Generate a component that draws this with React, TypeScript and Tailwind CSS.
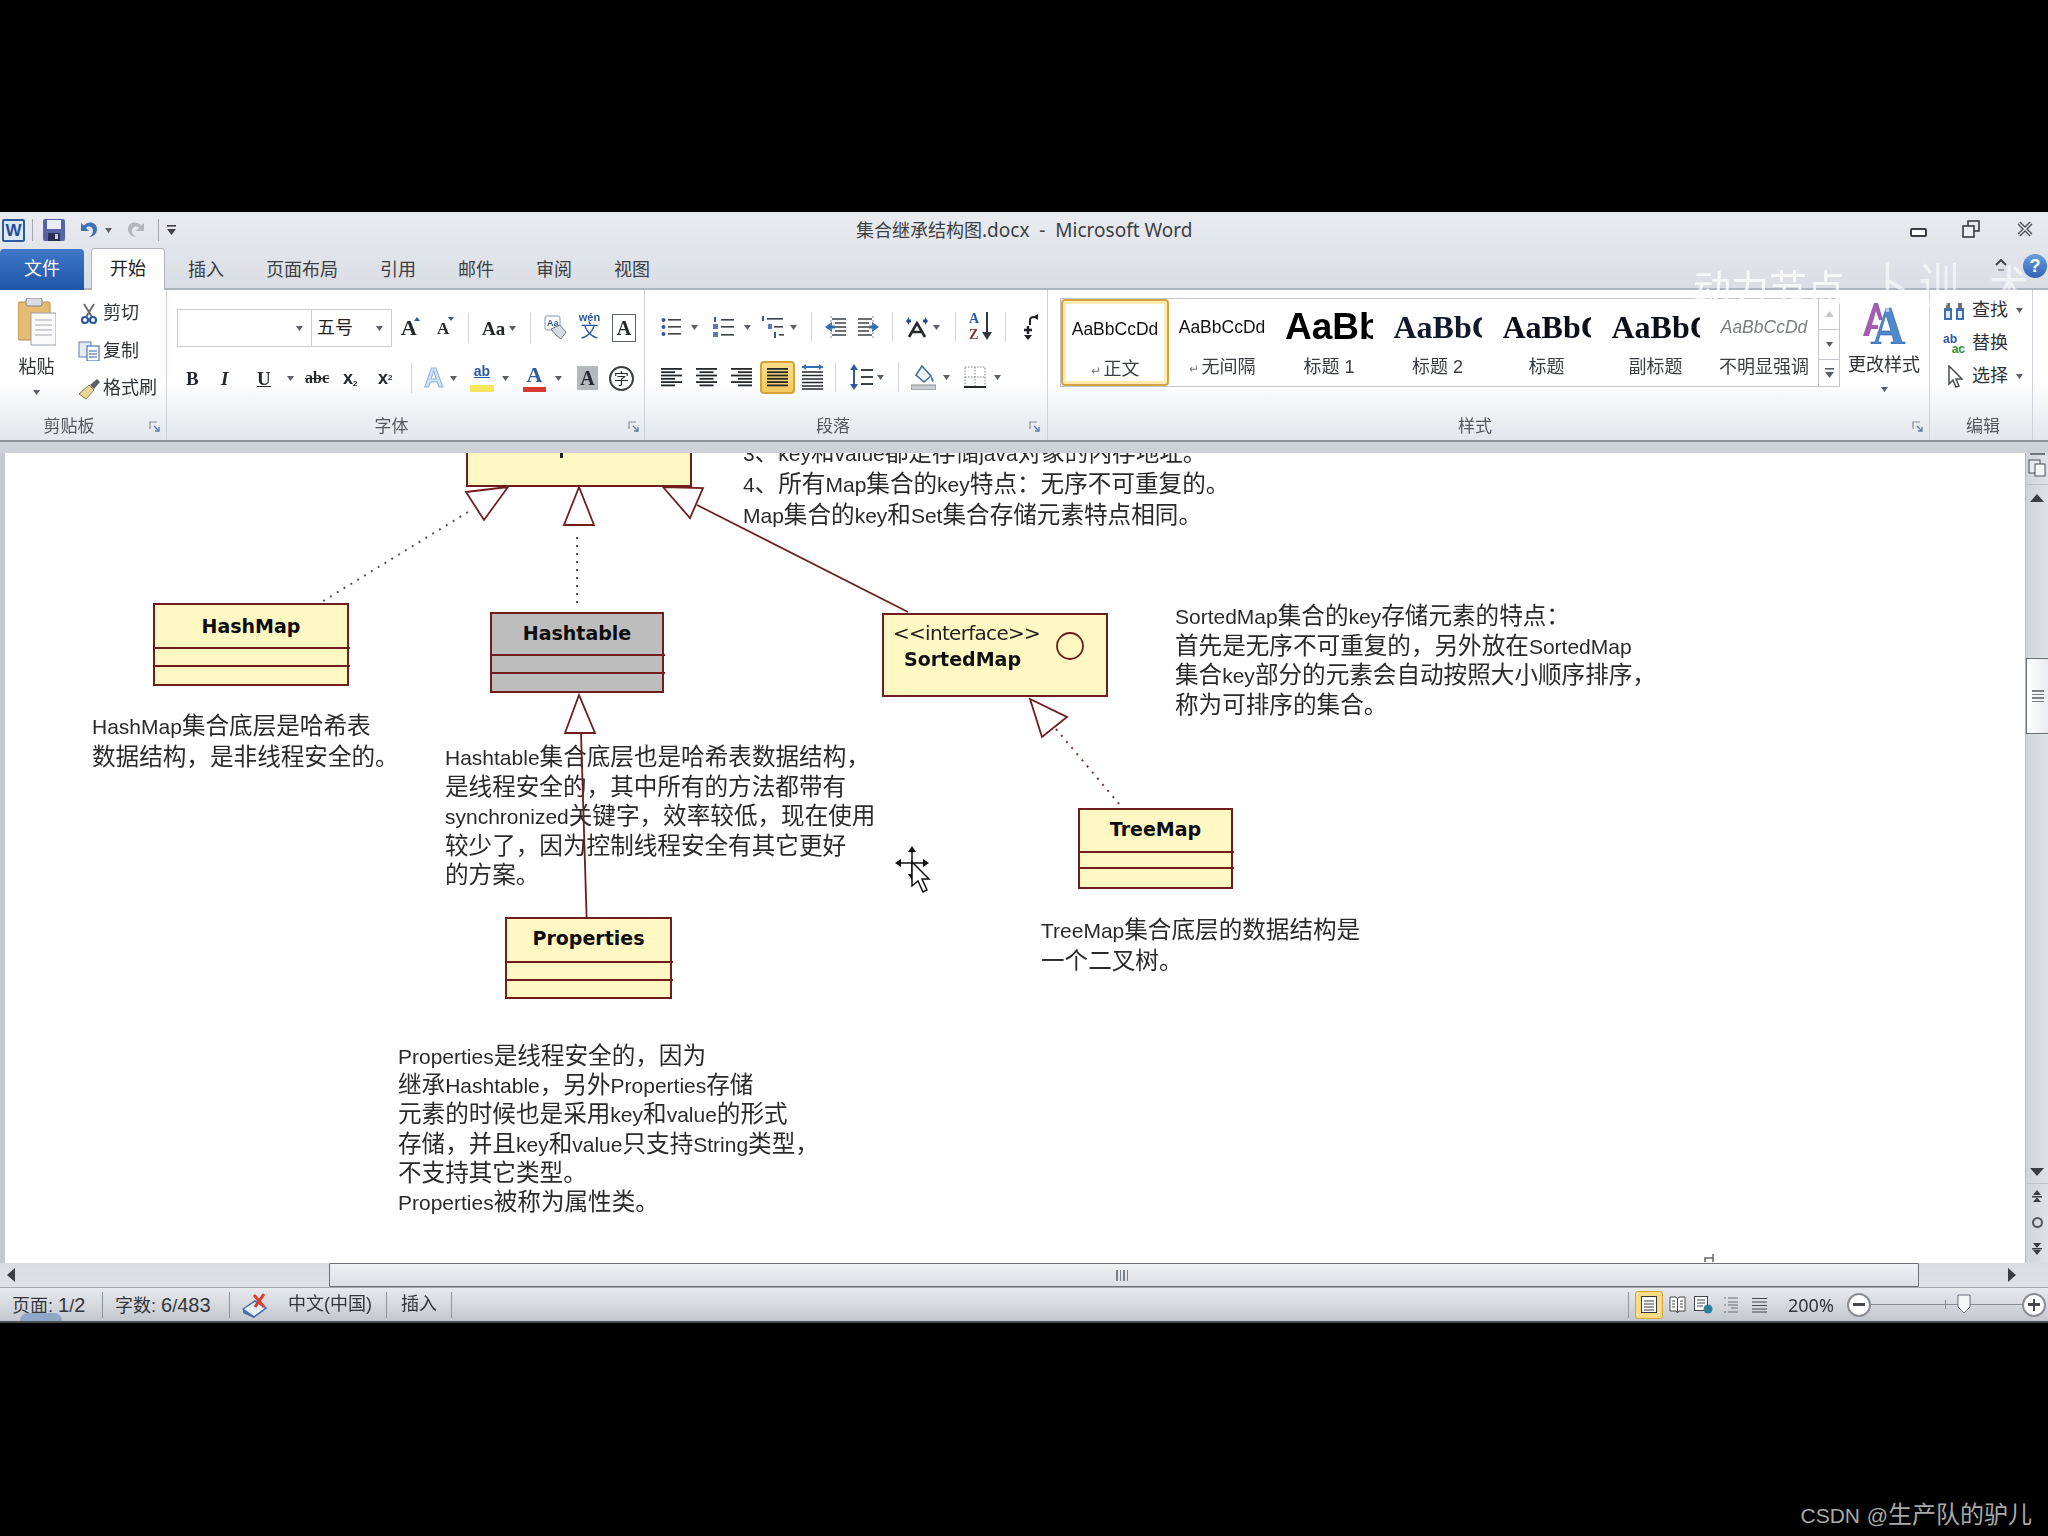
import React from "react";

const CJK = "font-['Liberation_Sans','Noto_Sans_CJK_SC',sans-serif]";

function Mixed({ s, latin = "text-[21px]" }: { s: string; latin?: string }) {
  const parts = s.split(/([A-Za-z0-9<>\-\.]+)/);
  return (
    <>
      {parts.map((p, i) =>
        /^[A-Za-z0-9<>\-\.]+$/.test(p) ? (
          <span key={i} className={latin}>
            {p}
          </span>
        ) : (
          <span key={i}>{p}</span>
        )
      )}
    </>
  );
}

const Arr = ({ className = "" }: { className?: string }) => (
  <svg width="7" height="5" viewBox="0 0 7 5" className={`shrink-0 ${className}`}>
    <path d="M0 0H7L3.5 5Z" fill="#5a5f68" />
  </svg>
);

const Sep = ({ className = "" }: { className?: string }) => (
  <div className={`w-px h-[30px] bg-[#d2d5da] shrink-0 ${className}`} />
);

const Launcher = ({ className = "" }: { className?: string }) => (
  <svg width="11" height="11" viewBox="0 0 11 11" className={`absolute ${className}`}>
    <path d="M1 8V1H8" fill="none" stroke="#8a8f98" strokeWidth="1.2" />
    <path d="M5 5L10 10M10 6V10H6" fill="none" stroke="#5c7ea8" strokeWidth="1.3" />
  </svg>
);

function Lines({ rows, x = 0 }: { rows: [number, number][]; x?: number }) {
  return (
    <>
      {rows.map(([y, l], i) => (
        <rect key={i} x={x} y={y} width={l} height={1.6} fill="#3d4148" />
      ))}
    </>
  );
}

const Ic = ({
  w,
  h,
  className = "",
  children,
}: {
  w: number;
  h: number;
  className?: string;
  children: React.ReactNode;
}) => (
  <svg width={w} height={h} viewBox={`0 0 ${w} ${h}`} className={`shrink-0 ${className}`}>
    {children}
  </svg>
);

const Bullets = ({ className = "" }: { className?: string }) => (
  <Ic w={21} h={20} className={className}>
    <circle cx="2.5" cy="3" r="2" fill="#2f5aa0" />
    <circle cx="2.5" cy="10" r="2" fill="#2f5aa0" />
    <circle cx="2.5" cy="17" r="2" fill="#2f5aa0" />
    <Lines x={7} rows={[[2, 13], [9, 13], [16, 13]]} />
  </Ic>
);
const Numbers = ({ className = "" }: { className?: string }) => (
  <Ic w={22} h={22} className={className}>
    <rect x="2" y="1" width="2" height="5" fill="#2f5aa0" />
    <rect x="1" y="8" width="5" height="5" fill="#2f5aa0" opacity=".8" />
    <rect x="1" y="16" width="5" height="5" fill="#2f5aa0" opacity=".8" />
    <Lines x={9} rows={[[3, 13], [10, 13], [18, 13]]} />
  </Ic>
);
const Multi = ({ className = "" }: { className?: string }) => (
  <Ic w={24} h={24} className={className}>
    <rect x="1" y="1" width="2" height="5" fill="#2f5aa0" />
    <rect x="7" y="9" width="4" height="5" fill="#2f5aa0" opacity=".8" />
    <rect x="13" y="17" width="2" height="6" fill="#2f5aa0" />
    <Lines x={6} rows={[[3, 16]]} />
    <Lines x={13} rows={[[11, 9]]} />
    <Lines x={18} rows={[[19, 5]]} />
  </Ic>
);
const Indent = ({ flip = false, className = "" }: { flip?: boolean; className?: string }) => (
  <Ic w={24} h={24} className={className}>
    <g transform={flip ? "translate(24 0) scale(-1 1)" : ""}>
      <path d="M2 12L9 7V17Z" fill="#2f6fb0" />
      <rect x="7" y="10.5" width="5" height="3" fill="#2f6fb0" />
      <path d="M9 4H23M12 8H23M12 12H23M12 16H23M9 20H23" stroke="#3d4148" strokeWidth="1.6" />
      <path d="M8 1V23" stroke="#8a8f98" strokeDasharray="2 2" />
    </g>
  </Ic>
);
const ChineseLayout = ({ className = "" }: { className?: string }) => (
  <Ic w={24} h={22} className={className}>
    <path d="M4 21L12 7L20 21M7.5 16H16.5" fill="none" stroke="#24272c" strokeWidth="2.6" />
    <path d="M1 5L4 1V3.5H6V6.5H4V9Z M23 5L20 1V3.5H18V6.5H20V9Z" fill="#1e4e8c" />
  </Ic>
);
const Sort = ({ className = "" }: { className?: string }) => (
  <div className={`relative w-[23px] h-[32px] shrink-0 ${className}`}>
    <span className="absolute left-0 top-[-3px] text-[14px] font-bold text-[#2f5aa0] font-['Liberation_Serif',serif]">A</span>
    <span className="absolute left-0 top-[13px] text-[14px] font-bold text-[#8c2f2f] font-['Liberation_Serif',serif]">Z</span>
    <svg width="10" height="30" viewBox="0 0 10 30" className="absolute right-0 top-0">
      <path d="M5 1V24" stroke="#33373d" strokeWidth="2" />
      <path d="M0 21H10L5 29Z" fill="#33373d" />
    </svg>
  </div>
);
const Para = ({ className = "" }: { className?: string }) => (
  <Ic w={18} h={26} className={className}>
    <path d="M9 11V6C9 4 11 3 13 3H16V1" fill="none" stroke="#1f2226" strokeWidth="2" />
    <path d="M7 3L12 0V6Z" fill="#1f2226" transform="translate(5 0)" />
    <path d="M3 16H11M7 12V20" stroke="#1f2226" strokeWidth="2.4" />
    <path d="M7 26L3 21H11Z" fill="#1f2226" />
  </Ic>
);
const Align = ({ kind, className = "" }: { kind: "l" | "c" | "r" | "j"; className?: string }) => {
  const ws = kind === "j" ? [21, 21, 21, 21, 21, 21] : [21, 14, 21, 14, 21, 14];
  return (
    <Ic w={21} h={20} className={className}>
      {ws.map((l, i) => (
        <rect
          key={i}
          x={kind === "l" || kind === "j" ? 0 : kind === "c" ? (21 - l) / 2 : 21 - l}
          y={1 + i * 3.3}
          width={l}
          height="1.8"
          fill="#24272c"
        />
      ))}
    </Ic>
  );
};
const Distrib = ({ className = "" }: { className?: string }) => (
  <Ic w={23} h={26} className={className}>
    <path d="M1 3H22" stroke="#2f6fb0" strokeWidth="2" />
    <path d="M1 3L5 0V6ZM22 3L18 0V6Z" fill="#2f6fb0" />
    <path d="M1 8H22M1 11.5H22M1 15H22M1 18.5H22M1 22H22M1 25H22" stroke="#24272c" strokeWidth="1.6" />
  </Ic>
);
const LineSpace = ({ className = "" }: { className?: string }) => (
  <Ic w={24} h={26} className={className}>
    <path d="M4 3V23" stroke="#2f5aa0" strokeWidth="2" />
    <path d="M4 0L8 6H0ZM4 26L8 20H0Z" fill="#2f5aa0" />
    <path d="M11 6H23M11 13H23M11 20H23" stroke="#3d4148" strokeWidth="1.8" />
  </Ic>
);
const Shading = ({ className = "" }: { className?: string }) => (
  <Ic w={25} h={26} className={className}>
    <path d="M11 2L20 12L13 18L5 11Z" fill="#eef3f8" stroke="#4a6f96" strokeWidth="1.6" />
    <path d="M20 12C23 15 23 17 22 18C20 18 20 15 20 12Z" fill="#3f7fc0" />
    <rect x="0" y="21" width="25" height="5" fill="#c8cbd0" stroke="#8a8f98" />
  </Ic>
);
const Borders = ({ className = "" }: { className?: string }) => (
  <Ic w={22} h={22} className={className}>
    <rect x="1" y="1" width="20" height="20" fill="none" stroke="#7a7e85" strokeDasharray="1.5 1.5" />
    <path d="M11 1V21M1 11H21" stroke="#7a7e85" strokeDasharray="1.5 1.5" />
    <path d="M0 21H22" stroke="#24272c" strokeWidth="2" />
  </Ic>
);

const UBox = ({
  box,
  header,
  mid,
  name,
  gray = false,
}: {
  box: string;
  header: string;
  mid: string;
  name: string;
  gray?: boolean;
}) => (
  <div className={`absolute border-2 border-[#6f1d1d] flex flex-col ${gray ? "bg-[#bdbdbd]" : "bg-[#fff8c2]"} ${box}`}>
    <div className={`flex items-center justify-center font-['DejaVu_Sans',sans-serif] font-bold text-[19px] text-[#0c0c0c] ${header}`}>{name}</div>
    <div className={`border-t-2 border-b-2 border-[#6f1d1d] -mr-[3px] ${mid}`} />
  </div>
);

const STYLES = [
  { w: "w-[108px]", s: "AaBbCcDd", c: "text-[17.5px] text-[#111]", m: "↵", l: "正文", sel: true, box: "justify-center" },
  { w: "w-[106px]", s: "AaBbCcDd", c: "text-[17.5px] text-[#111]", m: "↵", l: "无间隔", box: "justify-center" },
  { w: "w-[108px]", s: "AaBbCcDd", c: "text-[37px] font-bold text-black", l: "标题 1", box: "justify-start" },
  { w: "w-[109px]", s: "AaBbCcDd", c: "text-[32px] font-bold text-[#101a2c] font-['Liberation_Serif',serif]", l: "标题 2", box: "justify-start" },
  { w: "w-[109px]", s: "AaBbCcDd", c: "text-[32px] font-bold text-[#0b0f1a] font-['Liberation_Serif',serif]", l: "标题", box: "justify-start" },
  { w: "w-[109px]", s: "AaBbCcDd", c: "text-[32px] font-bold text-[#0b0f1a] font-['Liberation_Serif',serif]", l: "副标题", box: "justify-start" },
  { w: "w-[108px]", s: "AaBbCcDd", c: "text-[17.5px] italic text-[#7a7d82]", l: "不明显强调", box: "justify-center" },
];

export default function App() {
  return (
    <div className={`w-[2048px] h-[1536px] bg-black flex flex-col overflow-hidden text-[#3a3d42] ${CJK}`}>
      <div className="h-[212px] shrink-0" />
      <div className="h-[1111px] shrink-0 flex flex-col relative blur-[0.5px]">
        {/* title bar */}
        <div className="h-[36px] flex items-center bg-gradient-to-b from-[#e9ebef] to-[#e2e5ea] shrink-0">
          <div className="w-[856px] shrink-0 flex items-center">
            <div className="ml-[2px] w-[23px] h-[23px] border-2 border-[#2d5a9e] bg-[#dce8f6] rounded-[2px] flex items-center justify-center text-[#1f4f9c] font-bold text-[17px] leading-none">W</div>
            <div className="ml-[7px] w-px h-[22px] bg-[#a5a9b0]" />
            <Ic w={22} h={22} className="ml-[10px]">
              <rect x="0" y="0" width="22" height="22" rx="2" fill="#5a63a8" />
              <rect x="4" y="1" width="14" height="9" fill="#e9edf6" />
              <rect x="5" y="14" width="12" height="8" fill="#2b2f55" />
              <rect x="12" y="15" width="3" height="5" fill="#c3c8dc" />
            </Ic>
            <Ic w={20} h={20} className="ml-[13px]">
              <path d="M3 3V11H11L8 8C11 5 15 7 15 11C15 14 13 16 11 17C16 17 19 13 19 9C19 3 11 0 6 5.5Z" fill="#3f6fb5" />
            </Ic>
            <Arr className="ml-[7px]" />
            <Ic w={20} h={20} className="ml-[15px]">
              <path d="M17 3V11H9L12 8C9 5 5 7 5 11C5 14 7 16 9 17C4 17 1 13 1 9C1 3 9 0 14 5.5Z" fill="#b4b8be" />
            </Ic>
            <div className="ml-[11px] w-px h-[22px] bg-[#a5a9b0]" />
            <Ic w={9} h={10} className="ml-[8px]">
              <rect width="9" height="1.6" fill="#3d4148" />
              <path d="M0 4H9L4.5 10Z" fill="#3d4148" />
            </Ic>
          </div>
          <div className="text-[18px] text-[#3c3f44] whitespace-pre font-['Noto_Sans','Noto_Sans_CJK_SC',sans-serif]">
            集合继承结构图<span className="text-[19px]">.docx  -  Microsoft Word</span>
          </div>
          <div className="ml-auto flex items-center">
            <div className="w-[17px] h-[9px] mt-[4px] border-2 border-[#3a3d42] rounded-[2px] bg-white" />
            <Ic w={18} h={18} className="ml-[35px] -mt-[3px]">
              <rect x="6" y="1" width="11" height="10" fill="none" stroke="#3a3d42" strokeWidth="1.6" />
              <rect x="1" y="6" width="11" height="11" fill="#eef0f3" stroke="#3a3d42" strokeWidth="1.6" />
            </Ic>
            <Ic w={16} h={16} className="ml-[37px] mr-[15px] -mt-[3px]">
              <path d="M2 2L14 14M14 2L2 14" stroke="#4a4d52" strokeWidth="4" />
              <path d="M2 2L14 14M14 2L2 14" stroke="#eef0f3" strokeWidth="1.4" />
            </Ic>
          </div>
        </div>

        {/* tab row */}
        <div className="h-[42px] flex items-end text-[18px] bg-gradient-to-b from-[#e2e5ea] to-[#dadde3] border-b-2 border-[#b0b4bb] shrink-0 relative">
          <div className="w-[84px] h-[41px] rounded-t-[4px] bg-gradient-to-b from-[#3f78c8] to-[#1f56a8] text-white flex items-center justify-center -mb-[2px]">文件</div>
          <div className="ml-[7px] w-[74px] h-[42px] bg-white border border-b-0 border-[#b0b4bb] rounded-t-[4px] flex items-center justify-center text-[#222] -mb-[2px]">开始</div>
          <div className="h-[40px] flex items-center gap-[42px] ml-[23px] text-[#3c3f44] -mb-[2px]">
            <span>插入</span>
            <span>页面布局</span>
            <span>引用</span>
            <span>邮件</span>
            <span>审阅</span>
            <span>视图</span>
          </div>
          <div className="ml-auto flex items-center h-[40px] pb-[4px] mr-[1px]">
            <Ic w={12} h={14} className="mr-[16px]">
              <path d="M1 6L6 1L11 6" fill="none" stroke="#44474c" strokeWidth="2" />
              <path d="M3 11H9" stroke="#9a9da3" strokeWidth="2" />
            </Ic>
            <div className="w-[24px] h-[24px] rounded-full bg-gradient-to-b from-[#6b9ee0] to-[#2f62b8] text-white font-bold text-[18px] flex items-center justify-center leading-none">?</div>
          </div>
        </div>

        {/* ribbon */}
        <div className="h-[152px] flex shrink-0 bg-gradient-to-b from-white from-60% to-[#e3e6eb] text-[#2f3237] border-b-2 border-[#8f939a]">
          {/* clipboard */}
          <div className="w-[167px] shrink-0 border-r border-[#cfd2d8] flex flex-col relative">
            <div className="h-[123px] flex">
              <div className="w-[74px] shrink-0 flex flex-col items-center pr-[1px]">
                <Ic w={38} h={48} className="mt-[8px]">
                  <rect x="0" y="4" width="32" height="38" rx="2" fill="#e6bb72" stroke="#b58a4a" />
                  <rect x="8" y="0" width="16" height="8" rx="2" fill="#d9dde3" stroke="#7f848c" />
                  <rect x="13" y="15" width="25" height="32" fill="#fbfbfb" stroke="#9aa0a8" />
                  <path d="M17 22H34M17 27H34M17 32H34M17 37H34" stroke="#c0c4ca" strokeWidth="1.4" />
                </Ic>
                <span className="text-[18px] mt-[9px] leading-[24px]">粘贴</span>
                <Arr className="mt-[11px]" />
              </div>
              <div className="flex flex-col pt-[5px] text-[18px]">
                {[
                  ["剪切", "a"],
                  ["复制", "b"],
                  ["格式刷", "c"],
                ].map(([t, k]) => (
                  <div key={k} className="h-[37.5px] flex items-center">
                    <div className="w-[29px] flex justify-center shrink-0">
                      {k === "a" && (
                        <Ic w={16} h={22}>
                          <path d="M3 1L11 14M13 1L5 14" stroke="#6b7078" strokeWidth="2" />
                          <circle cx="4" cy="17" r="3" fill="none" stroke="#2f5aa0" strokeWidth="2.2" />
                          <circle cx="12" cy="17" r="3" fill="none" stroke="#2f5aa0" strokeWidth="2.2" />
                        </Ic>
                      )}
                      {k === "b" && (
                        <Ic w={22} h={20}>
                          <rect x="1" y="1" width="12" height="15" fill="#e4ebf5" stroke="#5d7fb0" />
                          <rect x="9" y="5" width="12" height="15" fill="#fff" stroke="#2f5aa0" />
                          <path d="M11 10H19M11 13H19M11 16H19" stroke="#2f5aa0" />
                        </Ic>
                      )}
                      {k === "c" && (
                        <Ic w={24} h={22}>
                          <path d="M2 16L12 7L17 12L9 21Z" fill="#e9d79a" stroke="#8f7c3f" />
                          <path d="M13 7L20 1L23 4L17 11Z" fill="#5a5f68" />
                        </Ic>
                      )}
                    </div>
                    <span>{t}</span>
                  </div>
                ))}
              </div>
            </div>
            <div className="h-[28px] flex items-center justify-center pt-[2px] pr-[28px] text-[17px] text-[#55585e]">剪贴板</div>
            <Launcher className="left-[149px] top-[131px]" />
          </div>

          {/* font */}
          <div className="w-[478px] shrink-0 border-r border-[#cfd2d8] flex flex-col relative">
            <div className="h-[123px] pt-[19px] flex flex-col gap-[15px]">
              <div className="flex items-center h-[38px]">
                <div className="ml-[10px] w-[135px] h-[38px] border border-[#c9ccd2] bg-white flex items-center justify-end pr-[8px]">
                  <Arr />
                </div>
                <div className="w-[80px] h-[38px] border border-l-0 border-[#c9ccd2] bg-white flex items-center justify-between pl-[5px] pr-[8px] text-[18px] text-[#222]">
                  五号
                  <Arr />
                </div>
                <div className="ml-[9px] w-[18px] relative font-['Liberation_Serif',serif] font-bold text-[22px] text-[#24272c] leading-none">
                  A
                  <svg width="6" height="4" viewBox="0 0 6 4" className="absolute -right-[1px] top-0"><path d="M0 4H6L3 0Z" fill="#2f5aa0" /></svg>
                </div>
                <div className="ml-[18px] w-[17px] relative font-['Liberation_Serif',serif] font-bold text-[17px] text-[#24272c] leading-none">
                  A
                  <svg width="6" height="4" viewBox="0 0 6 4" className="absolute right-0 -top-[3px]"><path d="M0 0H6L3 4Z" fill="#2f5aa0" /></svg>
                </div>
                <Sep className="ml-[14px]" />
                <div className="ml-[13px] w-[24px] font-['Liberation_Serif',serif] font-bold text-[19px] text-[#24272c] leading-none">Aa</div>
                <Arr className="ml-[3px]" />
                <Sep className="ml-[14px]" />
                <Ic w={24} h={26} className="ml-[12px]">
                  <rect x="2" y="1" width="15" height="14" rx="2" fill="#fff" stroke="#7f98bc" />
                  <text x="4" y="11" fontSize="9" fontWeight="700" fill="#2f5aa0">Aa</text>
                  <path d="M8 14L14 21L18 24L23 17L17 10Z" fill="#d6dbe3" stroke="#767c85" />
                </Ic>
                <div className="ml-[11px] w-[23px] h-[30px] flex flex-col items-center leading-none">
                  <span className="text-[11px] font-bold text-[#2f5aa0] -mt-[1px]">wén</span>
                  <span className="text-[18px] text-[#2f5aa0] -mt-[1px]">文</span>
                </div>
                <div className="ml-[11px] w-[24px] h-[28px] border border-[#5b5f66] bg-white font-['Liberation_Serif',serif] font-bold text-[20px] text-[#24272c] flex items-center justify-center leading-none">A</div>
              </div>
              <div className="flex items-center h-[32px] font-bold text-[#24272c] leading-none">
                <span className="ml-[19px] w-[13px] text-[19px] font-['Liberation_Serif',serif]">B</span>
                <span className="ml-[22px] w-[9px] text-[19px] italic font-['Liberation_Serif',serif]">I</span>
                <span className="ml-[27px] w-[13px] text-[19px] underline font-['Liberation_Serif',serif]">U</span>
                <Arr className="ml-[17px]" />
                <span className="ml-[11px] w-[24px] text-[16px] line-through font-['Liberation_Serif',serif]">abc</span>
                <span className="ml-[14px] w-[19px] text-[18px]">x<sub className="text-[8px]">2</sub></span>
                <span className="ml-[16px] w-[19px] text-[18px]">x<sup className="text-[8px]">2</sup></span>
                <Sep className="ml-[14px]" />
                <span className="ml-[12px] w-[23px] text-[27px] font-['Liberation_Sans',sans-serif] text-[#d4e4f6] [-webkit-text-stroke:1px_#8fb3dc]">A</span>
                <Arr className="ml-[3px]" />
                <div className="ml-[13px] w-[24px] h-[28px] flex flex-col items-center">
                  <span className="text-[14px] text-[#2f5aa0] underline">ab</span>
                  <div className="mt-auto w-[24px] h-[7px] bg-[#f7e55e]" />
                </div>
                <Arr className="ml-[8px]" />
                <div className="ml-[14px] w-[23px] h-[28px] flex flex-col items-center">
                  <span className="text-[22px] font-['Liberation_Serif',serif] text-[#2f5aa0]">A</span>
                  <div className="mt-auto w-[23px] h-[5px] bg-[#d63a2f]" />
                </div>
                <Arr className="ml-[9px]" />
                <div className="ml-[15px] w-[21px] h-[24px] bg-[#b5b8bd] text-[20px] font-['Liberation_Serif',serif] flex items-center justify-center">A</div>
                <div className="ml-[11px] w-[25px] h-[25px] rounded-full border-2 border-[#3a3d42] bg-white text-[15px] font-normal flex items-center justify-center">字</div>
              </div>
            </div>
            <div className="h-[28px] flex items-center justify-center pt-[2px] pr-[28px] text-[17px] text-[#55585e]">字体</div>
            <Launcher className="left-[461px] top-[131px]" />
          </div>

          {/* paragraph */}
          <div className="w-[403px] shrink-0 border-r border-[#cfd2d8] flex flex-col relative">
            <div className="h-[123px] pt-[20px] flex flex-col gap-[16px]">
              <div className="flex items-center h-[34px]">
                <Bullets className="ml-[16px]" />
                <Arr className="ml-[9px]" />
                <Numbers className="ml-[14px]" />
                <Arr className="ml-[10px]" />
                <Multi className="ml-[10px]" />
                <Arr className="ml-[5px]" />
                <Sep className="ml-[14px]" />
                <Indent className="ml-[11px]" />
                <Indent flip className="ml-[10px]" />
                <Sep className="ml-[11px]" />
                <ChineseLayout className="ml-[12px]" />
                <Arr className="ml-[4px]" />
                <Sep className="ml-[15px]" />
                <Sort className="ml-[13px]" />
                <Sep className="ml-[13px]" />
                <Para className="ml-[15px]" />
              </div>
              <div className="flex items-center h-[34px]">
                <Align kind="l" className="ml-[16px]" />
                <Align kind="c" className="ml-[14px]" />
                <Align kind="r" className="ml-[14px]" />
                <div className="ml-[8px] w-[35px] h-[33px] rounded-[4px] border-2 border-[#d3a33f] bg-gradient-to-b from-[#fbe08a] to-[#f8c85c] flex items-center justify-center shrink-0">
                  <Align kind="j" />
                </div>
                <Distrib className="ml-[6px]" />
                <Sep className="ml-[11px]" />
                <LineSpace className="ml-[14px]" />
                <Arr className="ml-[3px]" />
                <Sep className="ml-[14px]" />
                <Shading className="ml-[12px]" />
                <Arr className="ml-[7px]" />
                <Borders className="ml-[14px]" />
                <Arr className="ml-[8px]" />
              </div>
            </div>
            <div className="h-[28px] flex items-center justify-center pt-[2px] text-[17px] text-[#55585e] pr-[26px]">段落</div>
            <Launcher className="left-[384px] top-[131px]" />
          </div>

          {/* styles */}
          <div className="w-[882px] shrink-0 border-r border-[#cfd2d8] flex flex-col relative">
            <div className="h-[123px] flex items-start">
              <div className="ml-[12px] mt-[8px] w-[780px] h-[89px] border border-[#c4c7cd] bg-white flex relative">
                {STYLES.map((it, i) => (
                  <div
                    key={i}
                    className={`${it.w} h-[87px] shrink-0 flex flex-col items-center ${it.sel ? "border-2 border-[#d3a33f] rounded-[4px] shadow-[inset_0_0_0_3px_#fdebb0]" : ""}`}
                  >
                    <div className={`h-[56px] w-[88px] flex items-center overflow-hidden whitespace-nowrap ${it.box}`}>
                      <span className={it.c}>{it.s}</span>
                    </div>
                    <div className="text-[18px] text-[#3a3d42] leading-[24px] whitespace-nowrap">
                      {it.m ? <span className="text-[12px] text-[#777] mr-[3px]">{it.m}</span> : null}
                      {it.l}
                    </div>
                  </div>
                ))}
                <div className="absolute right-0 top-0 bottom-0 w-[21px] border-l border-[#c4c7cd] flex flex-col">
                  <div className="h-[31px] flex items-center justify-center border-b border-[#c4c7cd]">
                    <svg width="9" height="6" viewBox="0 0 9 6"><path d="M0 6H9L4.5 0Z" fill="#c5c8cd" /></svg>
                  </div>
                  <div className="h-[30px] flex items-center justify-center border-b border-[#c4c7cd]">
                    <Arr />
                  </div>
                  <div className="flex-1 flex items-center justify-center">
                    <svg width="9" height="10" viewBox="0 0 9 10"><rect width="9" height="1.6" fill="#5a5f68" /><path d="M0 4H9L4.5 10Z" fill="#5a5f68" /></svg>
                  </div>
                </div>
              </div>
              <div className="ml-[10px] w-[68px] flex flex-col items-center">
                <Ic w={44} h={42} className="mt-[12px]">
                  <path d="M1 34H7L9 27H16V23H10L14 9L17 18H21L16 1H12Z" fill="#a45cb0" />
                  <path d="M9 42H19V40H16L18 33H30L32 40H29V42H43V40H40L29 6H24L13 40H9ZM19 29L24 13L29 29Z" fill="#4f88cc" stroke="#2f5f9f" strokeWidth=".6" />
                </Ic>
                <span className="text-[18px] mt-[9px] leading-[24px] whitespace-nowrap">更改样式</span>
                <Arr className="mt-[10px]" />
              </div>
            </div>
            <div className="h-[28px] flex items-center justify-center pt-[2px] pr-[27px] text-[17px] text-[#55585e]">样式</div>
            <Launcher className="left-[864px] top-[131px]" />
          </div>

          {/* editing */}
          <div className="w-[103px] shrink-0 border-r border-[#cfd2d8] flex flex-col">
            <div className="h-[123px] pt-[4px] pl-[13px] flex flex-col text-[18px]">
              <div className="h-[33px] flex items-center">
                <Ic w={22} h={20}>
                  <rect x="1" y="7" width="8" height="12" fill="#3f6fb5" />
                  <rect x="13" y="7" width="8" height="12" fill="#3f6fb5" />
                  <rect x="3" y="10" width="4" height="7" fill="#dfe9f6" />
                  <rect x="15" y="10" width="4" height="7" fill="#dfe9f6" />
                  <rect x="3" y="2" width="4" height="6" fill="#6b7078" />
                  <rect x="15" y="2" width="4" height="6" fill="#6b7078" />
                </Ic>
                <span className="ml-[7px]">查找</span>
                <Arr className="ml-[8px]" />
              </div>
              <div className="h-[33px] flex items-center">
                <div className="w-[22px] flex flex-col text-[12px] leading-[10px] font-bold">
                  <span className="text-[#2f5aa0]">ab</span>
                  <span className="text-[#2c8f3c] text-right">ac</span>
                </div>
                <span className="ml-[7px]">替换</span>
              </div>
              <div className="h-[33px] flex items-center">
                <Ic w={22} h={24}>
                  <path d="M6 1V19L10 15L13 22L16 21L13 14H19Z" fill="#fff" stroke="#4a4e55" strokeWidth="1.5" />
                </Ic>
                <span className="ml-[7px]">选择</span>
                <Arr className="ml-[8px]" />
              </div>
            </div>
            <div className="h-[28px] flex items-center justify-center pt-[2px] pl-[4px] text-[17px] text-[#55585e]">编辑</div>
          </div>
        </div>

        {/* shadow band */}
        <div className="h-[11px] shrink-0 bg-[#ced1d7]" />

        {/* document */}
        <div className="flex-1 flex min-h-0">
          <div className="w-[4px] shrink-0 bg-[#c6cad0]" />
          <div className="w-[2021px] relative overflow-hidden bg-white text-[23.6px] text-[#2a2a2a]">
            <div className="absolute left-0 top-0 bottom-0 w-px bg-[#c6cad0]" />
            <UBox box="left-[462px] -top-[20px] w-[226px] h-[54px]" header="h-[60px]" mid="hidden" name="" />
            <div className="absolute left-[556px] top-0 w-[3px] h-[5px] bg-[#222]" />

            <UBox box="left-[149px] top-[150px] w-[196px] h-[83px]" header="h-[42px]" mid="h-[20px]" name="HashMap" />
            <UBox box="left-[486px] top-[159px] w-[174px] h-[81px]" header="h-[40px] pb-[2px]" mid="h-[20px]" name="Hashtable" gray />
            <div className="absolute left-[878px] top-[160px] w-[226px] h-[84px] border-2 border-[#6f1d1d] bg-[#fff8c2] text-[#111]">
              <div className="absolute left-[9px] top-[4px] text-[20px] whitespace-nowrap leading-[28px] font-['DejaVu_Sans',sans-serif] tracking-[-0.7px] text-[#222]">{"<<interface>>"}</div>
              <div className="absolute left-[20px] top-[30px] text-[19px] font-bold font-['DejaVu_Sans',sans-serif] leading-[28px]">SortedMap</div>
            </div>
            <UBox box="left-[1074px] top-[355px] w-[155px] h-[81px]" header="h-[41px] pb-[2px]" mid="h-[18px]" name="TreeMap" />
            <UBox box="left-[501px] top-[464px] w-[167px] h-[82px]" header="h-[42px] pb-[4px]" mid="h-[20px]" name="Properties" />

            <div className="absolute left-[739px] -top-[15px] leading-[30px] whitespace-nowrap">
              <div><Mixed s="3、key和value都是存储java对象的内存地址。" /></div>
              <div><Mixed s="4、所有Map集合的key特点：无序不可重复的。" /></div>
              <div><Mixed s="Map集合的key和Set集合存储元素特点相同。" /></div>
            </div>
            <div className="absolute left-[88px] top-[258px] leading-[30px] whitespace-nowrap">
              <div><Mixed s="HashMap集合底层是哈希表" /></div>
              <div><Mixed s="数据结构，是非线程安全的。" /></div>
            </div>
            <div className="absolute left-[441px] top-[290px] leading-[29.5px] whitespace-nowrap">
              <div><Mixed s="Hashtable集合底层也是哈希表数据结构，" /></div>
              <div><Mixed s="是线程安全的，其中所有的方法都带有" /></div>
              <div><Mixed s="synchronized关键字，效率较低，现在使用" /></div>
              <div><Mixed s="较少了，因为控制线程安全有其它更好" /></div>
              <div><Mixed s="的方案。" /></div>
            </div>
            <div className="absolute left-[1171px] top-[149px] leading-[29.6px] whitespace-nowrap">
              <div><Mixed s="SortedMap集合的key存储元素的特点：" /></div>
              <div><Mixed s="首先是无序不可重复的，另外放在SortedMap" /></div>
              <div><Mixed s="集合key部分的元素会自动按照大小顺序排序，" /></div>
              <div><Mixed s="称为可排序的集合。" /></div>
            </div>
            <div className="absolute left-[1037px] top-[462px] leading-[30px] whitespace-nowrap">
              <div><Mixed s="TreeMap集合底层的数据结构是" /></div>
              <div><Mixed s="一个二叉树。" /></div>
            </div>
            <div className="absolute left-[394px] top-[589px] leading-[29.2px] whitespace-nowrap">
              <div><Mixed s="Properties是线程安全的，因为" /></div>
              <div><Mixed s="继承Hashtable，另外Properties存储" /></div>
              <div><Mixed s="元素的时候也是采用key和value的形式" /></div>
              <div><Mixed s="存储，并且key和value只支持String类型，" /></div>
              <div><Mixed s="不支持其它类型。" /></div>
              <div><Mixed s="Properties被称为属性类。" /></div>
            </div>

            <svg viewBox="4 453 2021 810" width="2021" height="810" className="absolute left-0 top-0 pointer-events-none">
              <g fill="#fff" stroke="#6f1d1d" strokeWidth="1.8">
                <path d="M466 492L508 487L484 520Z" />
                <path d="M579 487L564 525H594Z" />
                <path d="M663 487L703 488L690 518Z" />
                <path d="M579 695L565 733H595Z" fill="none" />
                <path d="M1030 699L1067 717L1042 737Z" />
              </g>
              <g fill="none" stroke="#6f1d1d" strokeWidth="1.8">
                <path d="M697 505L908 612" />
                <path d="M581 733L586.6 917" />
                <ellipse cx="1070" cy="646" rx="13" ry="13" />
              </g>
              <g fill="none" stroke="#555" strokeWidth="2" strokeDasharray="2 6">
                <path d="M468 512L320 603" />
                <path d="M577 537V609" />
                <path d="M1056 729L1120 805" stroke="#7a3030" />
              </g>
              <path d="M1705 1262V1258H1713M1713 1262V1254" fill="none" stroke="#666" strokeWidth="1.5" />
              <g>
                <path d="M912 850V876M899 863H925" stroke="#111" strokeWidth="1.5" />
                <path d="M912 846L908 852H916ZM912 880L908 874H916ZM895 863L901 859V867ZM929 863L923 859V867Z" fill="#111" />
                <path d="M912 862V886L918 881L923 892L927 890L922 879H929Z" fill="#fff" stroke="#111" strokeWidth="1.5" />
              </g>
            </svg>
          </div>
          <div className="w-[23px] shrink-0 bg-gradient-to-r from-[#d0d3d9] to-[#dfe2e6] border-l border-[#b6b9c0] flex flex-col items-center">
            <div className="h-[32px] w-full flex flex-col items-center border-b border-[#c0c3c9]">
              <div className="w-[15px] h-[2px] bg-[#70747b]" />
              <Ic w={18} h={18} className="mt-[4px]">
                <rect x="1" y="1" width="11" height="13" fill="#e8eaee" stroke="#4a4e55" />
                <rect x="7" y="5" width="10" height="12" fill="#f4f5f7" stroke="#4a4e55" />
              </Ic>
            </div>
            <svg width="14" height="8" viewBox="0 0 14 8" className="mt-[9px]"><path d="M0 8H14L7 0Z" fill="#3a3d42" /></svg>
            <div className="mt-[156px] w-full h-[76px] bg-gradient-to-r from-white to-[#e9ebef] border-y border-l border-[#6b6f76] flex items-center justify-center">
              <div className="flex flex-col gap-[2px]">
                <div className="w-[12px] h-[1.5px] bg-[#7a7e85]" />
                <div className="w-[12px] h-[1.5px] bg-[#7a7e85]" />
                <div className="w-[12px] h-[1.5px] bg-[#7a7e85]" />
                <div className="w-[12px] h-[1.5px] bg-[#7a7e85]" />
              </div>
            </div>
            <svg width="14" height="8" viewBox="0 0 14 8" className="mt-[434px]"><path d="M0 0H14L7 8Z" fill="#3a3d42" /></svg>
            <div className="mt-[7px] w-full h-px bg-[#bfc2c8]" />
            <div className="mt-[6px] h-[14px] flex flex-col items-center">
              <svg width="10" height="12" viewBox="0 0 10 12"><path d="M5 0L9 5H1ZM0 6H10V7.5H0ZM5 7.5L9 12H1Z" fill="#3a3d42" /></svg>
            </div>
            <div className="mt-[13px] w-[11px] h-[11px] rounded-full border-2 border-[#54575d]" />
            <svg width="10" height="12" viewBox="0 0 10 12" className="mt-[15px]"><path d="M1 0H9L5 5ZM0 5H10V6.5H0ZM1 7H9L5 12Z" fill="#3a3d42" /></svg>
          </div>
        </div>

        {/* h scrollbar */}
        <div className="h-[25px] shrink-0 flex items-center bg-gradient-to-b from-[#d9dce1] to-[#dfe2e7] border-b border-[#a5a8af] relative">
          <svg width="8" height="14" viewBox="0 0 8 14" className="ml-[7px]"><path d="M8 0V14L0 7Z" fill="#3a3d42" /></svg>
          <div className="ml-[314px] w-[1590px] h-[24px] border border-[#6b6f76] rounded-[1px] bg-gradient-to-b from-[#f0f1f4] to-[#dcdfe4] flex items-center justify-center">
            <div className="flex gap-[2px] -ml-[4px]">
              <div className="w-[1.5px] h-[11px] bg-[#7a7e85]" />
              <div className="w-[1.5px] h-[11px] bg-[#7a7e85]" />
              <div className="w-[1.5px] h-[11px] bg-[#7a7e85]" />
              <div className="w-[1.5px] h-[11px] bg-[#7a7e85]" />
            </div>
          </div>
          <svg width="8" height="14" viewBox="0 0 8 14" className="ml-[89px]"><path d="M0 0V14L8 7Z" fill="#3a3d42" /></svg>
        </div>

        {/* status bar */}
        <div className="h-[35px] shrink-0 flex items-center bg-gradient-to-b from-[#e8eaee] to-[#c4c7cd] text-[18px] text-[#33363b] border-b-2 border-[#4a4d52] relative">
          <div className="absolute left-[20px] bottom-0 w-[42px] h-[8px] rounded-t-full bg-[#8fa6c4]" />
          <span className="ml-[12px] w-[75px] shrink-0 whitespace-nowrap"><Mixed s="页面: 1/2" latin="text-[20px]" /></span>
          <div className="ml-[15px] w-px h-[26px] shrink-0 bg-[#8f939a]" />
          <span className="ml-[12px] w-[97px] shrink-0 whitespace-nowrap"><Mixed s="字数: 6/483" latin="text-[20px]" /></span>
          <div className="ml-[17px] w-px h-[26px] shrink-0 bg-[#8f939a]" />
          <Ic w={25} h={27} className="ml-[12px]">
            <path d="M1 18L13 10L24 17L12 26Z" fill="#e8eef8" stroke="#3f6fb5" strokeWidth="1.5" />
            <path d="M1 19V22L12 27V25Z" fill="#3f6fb5" />
            <path d="M12 4L22 16M22 3L13 16" stroke="#d9402f" strokeWidth="3" />
          </Ic>
          <span className="ml-[21px] w-[82px] shrink-0 whitespace-nowrap">中文(中国)</span>
          <div className="ml-[16px] w-px h-[26px] shrink-0 bg-[#8f939a]" />
          <span className="ml-[14px] w-[36px] shrink-0 whitespace-nowrap">插入</span>
          <div className="ml-[14px] w-px h-[26px] shrink-0 bg-[#8f939a]" />
          <div className="ml-[1176px] w-px h-[26px] shrink-0 bg-[#8f939a]" />
          <div className="ml-[6px] w-[28px] h-[28px] rounded-[3px] border border-[#d3a33f] bg-[#fbdc85] flex items-center justify-center shrink-0">
            <Ic w={16} h={17}>
              <rect x=".5" y=".5" width="15" height="16" fill="#fff" stroke="#33363b" />
              <path d="M3 5H13M3 8H13M3 11H13M3 14H13" stroke="#33363b" />
            </Ic>
          </div>
          <Ic w={17} h={18} className="ml-[6px]">
            <path d="M1 1H7L8.5 3L10 1H16V15H10L8.5 17L7 15H1Z" fill="#fff" stroke="#44474c" />
            <path d="M8.5 3V17M3 5H6M3 8H6M3 11H6M11 5H14M11 8H14M11 11H14" stroke="#44474c" />
          </Ic>
          <Ic w={19} h={18} className="ml-[8px]">
            <rect x=".5" y=".5" width="13" height="14" fill="#fff" stroke="#44474c" />
            <path d="M3 4H11M3 7H11M3 10H9" stroke="#44474c" />
            <circle cx="14" cy="13" r="4.5" fill="#2f7f9c" />
          </Ic>
          <Ic w={15} h={16} className="ml-[11px]">
            <path d="M0 1H2M4 1H14M4 5H14M0 8H2M4 8H14M7 11H14M0 15H2M4 15H14" stroke="#6b6f76" />
          </Ic>
          <Ic w={15} h={16} className="ml-[13px]">
            <path d="M0 1.5H15M0 5H15M0 8.5H15M0 12H15M0 15H15" stroke="#44474c" strokeWidth="1.2" />
          </Ic>
          <span className="ml-[21px] w-[47px] shrink-0 whitespace-nowrap text-[18px] font-['Noto_Sans',sans-serif] leading-none">200%</span>
          <div className="ml-[12px] w-[24px] h-[24px] rounded-full border-2 border-[#8a8d93] bg-white flex items-center justify-center shrink-0">
            <div className="w-[12px] h-[2.5px] bg-[#44474c]" />
          </div>
          <div className="w-[151px] h-px bg-[#8a8d93] relative shrink-0">
            <div className="absolute left-[74px] -top-[4px] w-px h-[9px] bg-[#8a8d93]" />
            <svg width="14" height="20" viewBox="0 0 14 20" className="absolute left-[86px] -top-[10px]">
              <path d="M1 1H13V13L7 19L1 13Z" fill="#f6f7f9" stroke="#6b6f76" />
            </svg>
          </div>
          <div className="w-[24px] h-[24px] rounded-full border-2 border-[#8a8d93] bg-white flex items-center justify-center shrink-0 relative">
            <div className="w-[12px] h-[2.5px] bg-[#44474c]" />
            <div className="absolute w-[2.5px] h-[12px] bg-[#44474c]" />
          </div>
        </div>

        {/* watermark */}
        <div className="absolute left-[1693px] top-[57px] flex items-center text-white/80 text-[38px] leading-none whitespace-nowrap pointer-events-none">
          <span>动力节点</span>
          <span className="ml-[26px] text-[40px] scale-y-[1.35] text-white/60">卜</span>
          <span className="ml-[8px] text-[40px] scale-y-[1.35] text-white/60">训</span>
          <span className="ml-[30px] text-[40px] scale-y-[1.2] text-white/60">术</span>
        </div>
      </div>

      {/* bottom black */}
      <div className="flex-1 flex justify-end items-end pr-[16px] pb-[4px]">
        <span className="text-[24px] leading-[32px] text-[#a9a9a9] whitespace-nowrap">
          <span className="text-[21px]">CSDN</span> <span className="text-[21px]">@</span>生产队的驴儿
        </span>
      </div>
    </div>
  );
}
